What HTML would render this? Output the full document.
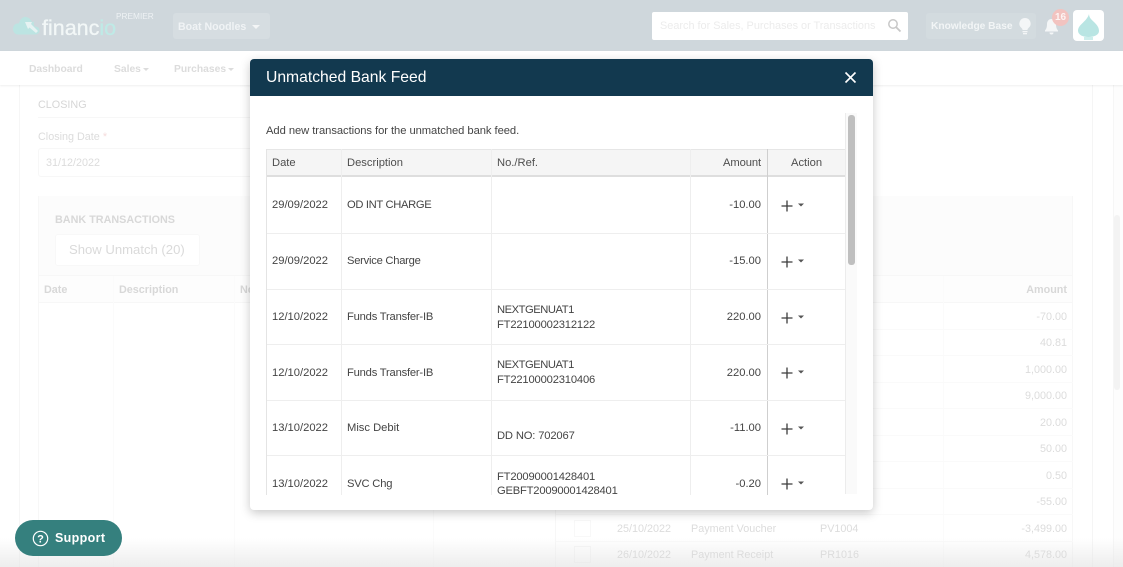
<!DOCTYPE html>
<html><head><meta charset="utf-8">
<style>
html,body{margin:0;padding:0;width:1123px;height:567px;overflow:hidden;background:#fff;font-family:"Liberation Sans",sans-serif}
.a{position:absolute}
.t{position:absolute;white-space:nowrap;line-height:16px;font-size:12px}
.r{text-align:right}
.bg{color:#dcdcdc;font-size:10.8px}
.bb{color:#d8d8d8;font-weight:bold;font-size:10.8px}
.m{color:#444;font-size:11.2px;margin-top:1px}
.h{color:#4e4e4e;font-size:11.2px;margin-top:1px}
.line{position:absolute;background:#f7f7f7}
.fl{position:absolute;background:#f8f8f8}
.v{background:#fbfbfb}
.rl{position:absolute;left:873px;width:200px;height:1px;background:#fafafa}
</style></head><body>
<div class="a" style="left:0;top:0;width:1123px;height:567px;overflow:hidden">

<!-- page background -->
<div class="fl" style="left:19px;top:85px;width:1px;height:482px;background:#f6f6f6"></div>
<div class="fl" style="left:1092px;top:85px;width:1px;height:482px;background:#f5f5f5"></div>
<div class="fl" style="left:38px;top:196px;width:1035px;height:80px;background:#fcfcfc"></div>
<div class="fl" style="left:38px;top:276px;width:1035px;height:26px;background:#fdfdfd"></div>
<div class="line" style="left:38px;top:275px;width:1035px;height:1px"></div>
<div class="line" style="left:38px;top:302px;width:1035px;height:1px"></div>
<div class="line" style="left:38px;top:196px;width:1px;height:371px"></div>
<div class="line" style="left:1072px;top:196px;width:1px;height:371px"></div>
<div class="line v" style="left:113px;top:276px;width:1px;height:291px"></div>
<div class="line v" style="left:234px;top:276px;width:1px;height:291px"></div>
<div class="line v" style="left:433px;top:510px;width:1px;height:57px"></div>
<div class="line" style="left:555px;top:510px;width:1px;height:57px"></div>
<div class="line v" style="left:943px;top:276px;width:1px;height:291px"></div>
<div class="line" style="left:38px;top:117px;width:212px;height:1px"></div>
<div class="a" style="left:38px;top:148px;width:240px;height:27px;border:1px solid #f7f7f7;border-radius:3px"></div>
<div class="a" style="left:55px;top:234px;width:143px;height:30px;background:#fff;border:1px solid #f8f8f8;border-radius:3px"></div>

<div class="t" style="left:38px;top:97px;font-size:10.8px;color:#d6d6d6">CLOSING</div>
<div class="t bg" style="left:38px;top:129px">Closing Date <span style="color:#f5dcdc">*</span></div>
<div class="t bg" style="left:46px;top:155px">31/12/2022</div>
<div class="t bb" style="left:55px;top:212px">BANK TRANSACTIONS</div>
<div class="t" style="left:69px;top:242px;font-size:13.1px;color:#dadada">Show Unmatch (20)</div>
<div class="t bb" style="left:44px;top:282px">Date</div>
<div class="t bb" style="left:119px;top:282px">Description</div>
<div class="t bb" style="left:240px;top:282px">No</div>

<div class="t bb r" style="right:56px;top:282px">Amount</div>
<div class="t bg r" style="right:56px;top:309px">-70.00</div>
<div class="t bg r" style="right:56px;top:335px">40.81</div>
<div class="t bg r" style="right:56px;top:362px">1,000.00</div>
<div class="t bg r" style="right:56px;top:388px">9,000.00</div>
<div class="t bg r" style="right:56px;top:415px">20.00</div>
<div class="t bg r" style="right:56px;top:441px">50.00</div>
<div class="t bg r" style="right:56px;top:468px">0.50</div>
<div class="t bg r" style="right:56px;top:494px">-55.00</div>
<div class="rl" style="top:329px"></div>
<div class="rl" style="top:355px"></div>
<div class="rl" style="top:382px"></div>
<div class="rl" style="top:408px"></div>
<div class="rl" style="top:435px"></div>
<div class="rl" style="top:461px"></div>
<div class="rl" style="top:488px"></div>
<div class="rl" style="top:514px;left:556px;width:517px"></div>
<div class="rl" style="top:541px;left:556px;width:517px"></div>

<div class="a" style="left:574px;top:520px;width:15px;height:15px;border:1px solid #f8f8f8"></div>
<div class="a" style="left:574px;top:546px;width:15px;height:15px;border:1px solid #f6f6f6"></div>

<!-- right page scrollbar -->
<div class="a" style="left:1113px;top:85px;width:10px;height:482px;background:#fdfdfd;border-left:1px solid #f6f6f6;box-sizing:border-box"></div>
<div class="a" style="left:1114px;top:215px;width:6px;height:175px;background:#f3f3f3;border-radius:3px"></div>

<!-- bottom fade -->
<div class="a" style="left:0;top:538px;width:1123px;height:29px;background:linear-gradient(to bottom,rgba(228,228,228,0),rgba(228,228,228,.65))"></div>

<div class="t bg" style="left:617px;top:521px">25/10/2022</div>
<div class="t bg" style="left:617px;top:547px">26/10/2022</div>
<div class="t bg" style="left:691px;top:521px">Payment Voucher</div>
<div class="t bg" style="left:691px;top:547px">Payment Receipt</div>
<div class="t bg" style="left:820px;top:521px">PV1004</div>
<div class="t bg" style="left:820px;top:547px">PR1016</div>
<div class="t bg r" style="right:56px;top:521px">-3,499.00</div>
<div class="t bg r" style="right:56px;top:547px">4,578.00</div>

<!-- header -->
<div class="a" style="left:0;top:0;width:1123px;height:51px;background:#cfd7dc"></div>
<svg class="a" style="left:12px;top:14px" width="32" height="24" viewBox="0 0 32 24">
<path d="M1 15c0-4 3-6 6-5.500C8 5 11 2.500 14 3c3 .5 5 2.500 6 5 .8 0 1.500-.5 2.500-.5-1 1-1 3 0 5 3 0 5 1 5 4 0 2.500-2 4-5 4H6c-3 0-5-2.500-5-5.500z" fill="#bce4e2"/>
<path d="M13 8l7 0-1 2 7 7-2 2-6.500-5.500L16 15z" fill="#e6f2f2"/>
</svg>
<div class="t" style="left:42px;top:15px;font-size:21.5px;line-height:26px;color:#f2f7f7;-webkit-text-stroke:.3px #f2f7f7;">financ<span style="color:#bfeae6;-webkit-text-stroke:.3px #bfeae6">io</span></div>
<div class="t" style="left:116px;top:8px;font-size:8.3px;color:#eef2f4">PREMIER</div>
<div class="a" style="left:173px;top:13px;width:97px;height:26px;background:#d6dde1;border-radius:3px"></div>
<div class="t" style="left:178px;top:19px;font-size:10.6px;font-weight:bold;color:#f0f3f5">Boat Noodles</div>
<div class="a" style="left:252px;top:25px;width:0;height:0;border:4px solid transparent;border-top:4px solid #f3f5f6"></div>

<div class="a" style="left:652px;top:12px;width:256px;height:28px;background:#fff;border-radius:2px"></div>
<div class="t" style="left:660px;top:18px;font-size:10.9px;color:#ececec">Search for Sales, Purchases or Transactions</div>
<svg class="a" style="left:887px;top:18px" width="15" height="15" viewBox="0 0 15 15"><circle cx="6" cy="6" r="4.2" fill="none" stroke="#c8c8c8" stroke-width="1.5"/><path d="M9.2 9.2L13.5 13.500" stroke="#c8c8c8" stroke-width="1.8"/></svg>

<div class="a" style="left:926px;top:13px;width:110px;height:26px;background:#d3dbdf;border-radius:3px"></div>
<div class="t" style="left:931px;top:19px;font-size:10.2px;font-weight:bold;color:#f2f5f6">Knowledge Base</div>
<svg class="a" style="left:1018px;top:17px" width="14" height="18" viewBox="0 0 14 18"><path d="M7 1a5.6 5.6 0 0 0-3.5 10c.7.6 1 1.200 1 2h5c0-.8.3-1.400 1-2A5.600 5.600 0 0 0 7 1z" fill="#f4f6f7"/><rect x="4.500" y="14" width="5" height="1.300" fill="#f4f6f7"/><rect x="5" y="16" width="4" height="1.300" fill="#f4f6f7"/></svg>
<svg class="a" style="left:1044px;top:18px" width="15" height="17" viewBox="0 0 15 17"><path d="M7.500 1c-3 0-4.500 2.500-4.500 5 0 3.500-.8 5-2 6.500v1h13v-1c-1.200-1.500-2-3-2-6.500 0-2.500-1.500-5-4.500-5z" fill="#f4f6f7"/><path d="M5.500 14.500a2 2 0 0 0 4 0z" fill="#f4f6f7"/></svg>
<div class="a" style="left:1052px;top:9px;width:17px;height:17px;border-radius:50%;background:#f2c3c0;color:#fdf4f3;font-size:10px;font-weight:bold;line-height:17px;text-align:center">16</div>
<div class="a" style="left:1073px;top:10px;width:31px;height:31px;background:#fff;border-radius:4px"></div>
<svg class="a" style="left:1075px;top:12px" width="27" height="29" viewBox="0 0 27 29"><path d="M14 2c0 4 3 6 6 9 2.500 2.500 4 5 4 8 0 4-5 6-10.500 6S3 23 3 18.500c0-6 9-9 11-16.500z" fill="#b9e5e3"/><rect x="9" y="25" width="9" height="3" fill="#cdeeec"/></svg>

<!-- nav -->
<div class="a" style="left:0;top:51px;width:1123px;height:34px;background:#fff;box-shadow:0 1px 2px rgba(0,0,0,.07)"></div>
<div class="t" style="left:29px;top:61px;font-size:10.3px;font-weight:bold;color:#dcdcdc;margin-top:1px">Dashboard</div>
<div class="t" style="left:114px;top:61px;font-size:10.3px;font-weight:bold;color:#dcdcdc;margin-top:1px">Sales</div>
<div class="a" style="left:143px;top:68px;width:0;height:0;border:3px solid transparent;border-top:3px solid #dcdcdc"></div>
<div class="t" style="left:174px;top:61px;font-size:10.3px;font-weight:bold;color:#dcdcdc;margin-top:1px">Purchases</div>
<div class="a" style="left:228px;top:68px;width:0;height:0;border:3px solid transparent;border-top:3px solid #dcdcdc"></div>

<!-- support -->
<div class="a" style="left:15px;top:520px;width:107px;height:36px;border-radius:18px;background:#35807e"></div>
<svg class="a" style="left:32px;top:530px" width="17" height="17" viewBox="0 0 17 17"><circle cx="8.500" cy="8.500" r="7.200" fill="none" stroke="#fff" stroke-width="1.200"/><text x="8.500" y="12.500" text-anchor="middle" font-size="11" font-weight="bold" font-family="Liberation Sans" fill="#fff">?</text></svg>
<div class="t" style="left:55px;top:530px;font-size:12.5px;font-weight:bold;color:#fff;letter-spacing:.35px">Support</div>

<!-- modal -->
<div class="a" style="left:250px;top:59px;width:623px;height:451px;background:#fff;border-radius:4px;box-shadow:0 3px 10px rgba(0,0,0,.22);overflow:hidden">
  <div class="a" style="left:0;top:0;width:623px;height:37px;background:#12394f"></div>
  <div class="t" style="left:16px;top:10px;font-size:15.7px;line-height:18px;color:#fff">Unmatched Bank Feed</div>
  <svg class="a" style="left:594px;top:12px" width="13" height="13" viewBox="0 0 13 13"><path d="M1.500 1.500L11.500 11.500M11.500 1.500L1.500 11.500" stroke="#fff" stroke-width="1.600"/></svg>
  <div class="t m" style="left:16px;top:63px;letter-spacing:-.05px">Add new transactions for the unmatched bank feed.</div>

  <!-- scroll track -->
  <div class="a" style="left:595px;top:54px;width:12px;height:381px;background:#fafafa;border-left:1px solid #ececec;box-sizing:border-box"></div>
  <div class="a" style="left:598px;top:56px;width:7px;height:150px;background:#bfbfbf;border-radius:3px"></div>

  <!-- table -->
  <div class="a" style="left:16px;top:90px;width:579px;height:346px;overflow:hidden;background:#fff;border-left:1px solid #e4e4e4;box-sizing:border-box">
    <div class="a" style="left:0;top:0;width:579px;height:28px;background:#f5f5f5;border-top:1px solid #e6e6e6;border-bottom:2px solid #dedede;box-sizing:border-box"></div>
    <div class="line" style="left:74px;top:0;width:1px;height:346px;background:#eeeeee"></div>
    <div class="line" style="left:224px;top:0;width:1px;height:346px;background:#eeeeee"></div>
    <div class="line" style="left:423px;top:0;width:1px;height:346px;background:#eeeeee"></div>
    <div class="line" style="left:500px;top:0;width:1px;height:346px;background:#cfcfcf"></div>
    <div class="line" style="left:0;top:84px;width:579px;height:1px;background:#eeeeee"></div>
    <div class="line" style="left:0;top:140px;width:579px;height:1px;background:#eeeeee"></div>
    <div class="line" style="left:0;top:195px;width:579px;height:1px;background:#eeeeee"></div>
    <div class="line" style="left:0;top:251px;width:579px;height:1px;background:#eeeeee"></div>
    <div class="line" style="left:0;top:306px;width:579px;height:1px;background:#eeeeee"></div>

    <div class="t h" style="left:5px;top:5px">Date</div>
    <div class="t h" style="left:80px;top:5px">Description</div>
    <div class="t h" style="left:230px;top:5px">No./Ref.</div>
    <div class="t h r" style="right:84px;top:5px;letter-spacing:-.1px">Amount</div>
    <div class="t h" style="left:524px;top:5px">Action</div>

    <div class="t m" style="left:5px;top:47px">29/09/2022</div>
    <div class="t m" style="left:80px;top:47px;letter-spacing:-.33px">OD INT CHARGE</div>
    <div class="t m r" style="right:84px;top:47px">-10.00</div>

    <div class="t m" style="left:5px;top:103px">29/09/2022</div>
    <div class="t m" style="left:80px;top:103px;letter-spacing:-.25px">Service Charge</div>
    <div class="t m r" style="right:84px;top:103px">-15.00</div>

    <div class="t m" style="left:5px;top:159px">12/10/2022</div>
    <div class="t m" style="left:80px;top:159px;letter-spacing:-.2px">Funds Transfer-IB</div>
    <div class="t m" style="left:230px;top:152px;letter-spacing:-.45px">NEXTGENUAT1</div>
    <div class="t m" style="left:230px;top:167px;letter-spacing:-.17px">FT22100002312122</div>
    <div class="t m r" style="right:84px;top:159px">220.00</div>

    <div class="t m" style="left:5px;top:215px">12/10/2022</div>
    <div class="t m" style="left:80px;top:215px;letter-spacing:-.2px">Funds Transfer-IB</div>
    <div class="t m" style="left:230px;top:207px;letter-spacing:-.45px">NEXTGENUAT1</div>
    <div class="t m" style="left:230px;top:222px;letter-spacing:-.17px">FT22100002310406</div>
    <div class="t m r" style="right:84px;top:215px">220.00</div>

    <div class="t m" style="left:5px;top:270px">13/10/2022</div>
    <div class="t m" style="left:80px;top:270px">Misc Debit</div>
    <div class="t m" style="left:230px;top:278px;letter-spacing:-.15px">DD NO: 702067</div>
    <div class="t m r" style="right:84px;top:270px">-11.00</div>

    <div class="t m" style="left:5px;top:326px">13/10/2022</div>
    <div class="t m" style="left:80px;top:326px;letter-spacing:-.2px">SVC Chg</div>
    <div class="t m" style="left:230px;top:319px;letter-spacing:-.17px">FT20090001428401</div>
    <div class="t m" style="left:230px;top:333px;letter-spacing:-.2px">GEBFT20090001428401</div>
    <div class="t m r" style="right:84px;top:326px">-0.20</div>

    <svg class="a" style="left:514px;top:51px" width="30" height="12" viewBox="0 0 30 12"><path d="M6 0.500V11.500M0.500 6H11.500" stroke="#3c3c3c" stroke-width="1.300"/><path d="M17 3.500h6l-3 3z" fill="#555"/></svg>
    <svg class="a" style="left:514px;top:107px" width="30" height="12" viewBox="0 0 30 12"><path d="M6 0.500V11.500M0.500 6H11.500" stroke="#3c3c3c" stroke-width="1.300"/><path d="M17 3.500h6l-3 3z" fill="#555"/></svg>
    <svg class="a" style="left:514px;top:163px" width="30" height="12" viewBox="0 0 30 12"><path d="M6 0.500V11.500M0.500 6H11.500" stroke="#3c3c3c" stroke-width="1.300"/><path d="M17 3.500h6l-3 3z" fill="#555"/></svg>
    <svg class="a" style="left:514px;top:218px" width="30" height="12" viewBox="0 0 30 12"><path d="M6 0.500V11.500M0.500 6H11.500" stroke="#3c3c3c" stroke-width="1.300"/><path d="M17 3.500h6l-3 3z" fill="#555"/></svg>
    <svg class="a" style="left:514px;top:274px" width="30" height="12" viewBox="0 0 30 12"><path d="M6 0.500V11.500M0.500 6H11.500" stroke="#3c3c3c" stroke-width="1.300"/><path d="M17 3.500h6l-3 3z" fill="#555"/></svg>
    <svg class="a" style="left:514px;top:329px" width="30" height="12" viewBox="0 0 30 12"><path d="M6 0.500V11.500M0.500 6H11.500" stroke="#3c3c3c" stroke-width="1.300"/><path d="M17 3.500h6l-3 3z" fill="#555"/></svg>
  </div>
</div>
</div>
</body></html>
